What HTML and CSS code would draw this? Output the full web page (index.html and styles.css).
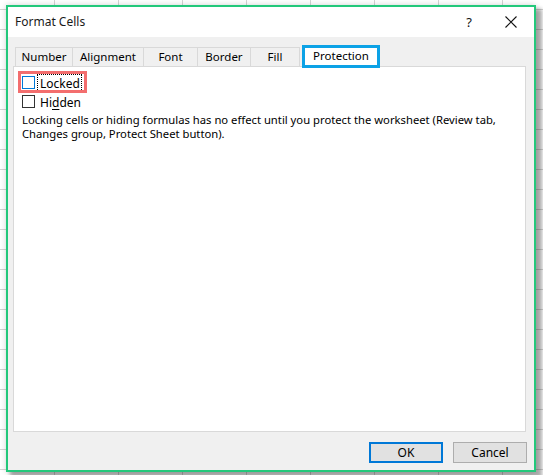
FILE: index.html
```html
<!DOCTYPE html>
<html>
<head>
<meta charset="utf-8">
<link rel="stylesheet" href="styles.css">
</head>
<body>
<div class="dialog">
  <div class="titlebar">
    <span class="title">Format Cells</span>
    <span class="help">?</span>
    <svg class="close" width="12" height="12" viewBox="0 0 12 12"><path d="M0.5 0.5 L11.5 11.5 M11.5 0.5 L0.5 11.5" stroke="#111" stroke-width="1.1" fill="none"/></svg>
  </div>
  <div class="tabs">
    <div class="tab t-number">Number</div>
    <div class="tab t-align">Alignment</div>
    <div class="tab t-font">Font</div>
    <div class="tab t-border">Border</div>
    <div class="tab t-fill">Fill</div>
    <div class="tab t-prot selected">Protection</div>
  </div>
  <div class="panel">
    <div class="row">
      <span class="cb cb-focus"></span><span class="label focus"><u>L</u>ocked</span>
    </div>
    <div class="row">
      <span class="cb"></span><span class="label">Hi<u>d</u>den</span>
    </div>
    <p class="desc"><span class="line">Locking cells or hiding formulas has no effect until you protect the worksheet (Review tab,</span><br><span class="line">Changes group, Protect Sheet button).</span></p>
    <div class="mark"></div>
  </div>
  <div class="buttons">
    <button class="btn default">OK</button>
    <button class="btn">Cancel</button>
  </div>
</div>
</body>
</html>
```
FILE: styles.css
```css
html, body {
  margin: 0;
  padding: 0;
}
body {
  width: 543px;
  height: 475px;
  overflow: hidden;
  background-color: #ffffff;
  background-image:
    linear-gradient(to right, #d4d4d4 1px, transparent 1px),
    linear-gradient(to bottom, #d4d4d4 1px, transparent 1px);
  background-size: 64px 20px;
  background-position: 54px 9px;
  font-family: "Noto Sans", "Open Sans", "DejaVu Sans", sans-serif;
  font-size: 12px;
  color: #000;
}
.dialog {
  margin: 5px 0 0 6px;
  width: 530px;
  height: 467px;
  box-sizing: border-box;
  border: 2px solid #23c87b;
  background: #f0f0f0;
  box-shadow: 0 0 6px rgba(0,0,0,0.18), 5px 5px 4px 1px rgba(0,0,0,0.32);
  display: flex;
  flex-direction: column;
}
.titlebar {
  height: 30px;
  flex: none;
  background: #ffffff;
  display: flex;
  align-items: center;
  padding-left: 7px;
  position: relative;
}
.title {
  font-size: 12px;
  color: #1a1a1a;
  flex: 1;
  padding-bottom: 1px;
}
.help {
  font-size: 13px;
  color: #111;
  margin-right: 33px;
}
.close {
  margin-right: 17px;
  display: block;
}
.tabs {
  flex: none;
  display: flex;
  height: 19px;
  margin-top: 10px;
  padding-left: 7px;
  position: relative;
  z-index: 1;
}
.tab {
  box-sizing: border-box;
  height: 19px;
  border-top: 1px solid #d9d9d9;
  border-left: 1px solid #d9d9d9;
  text-align: center;
  line-height: 17px;
  font-size: 11.5px;
}
.t-number { width: 57px; }
.t-align { width: 71px; }
.t-font { width: 54px; }
.t-border { width: 53px; }
.t-fill { width: 50px; border-right: 1px solid #d9d9d9; }
.t-prot { width: 78px; margin-left: 2px; }
.tab.selected {
  position: relative;
  background: #fff;
  border: none;
}
.tab.selected::after {
  content: "";
  position: absolute;
  left: 0;
  right: 0;
  top: -2px;
  bottom: -2px;
  border: 3px solid #0ca2e6;
}
.panel {
  flex: 1;
  margin: 0 8px 0 5px;
  background: #fff;
  border: 1px solid #d9d9d9;
  padding: 6px 8px 0;
  position: relative;
}
.row {
  height: 19px;
  display: flex;
  align-items: center;
}
.cb {
  width: 13px;
  height: 13px;
  box-sizing: border-box;
  border: 1px solid #333;
  background: #fff;
  flex: none;
}
.cb-focus {
  border-color: #0078d7;
}
.label {
  margin-left: 2px;
  padding: 0 1px 0 2px;
  height: 18px;
  line-height: 17px;
  box-sizing: border-box;
  border: 1px solid transparent;
  font-size: 12px;
}
.label.focus {
  border: 1px dotted #000;
}
.label u {
  text-decoration-thickness: 1px;
  text-underline-offset: 2px;
}
.desc {
  margin: 2px 0 0;
  line-height: 14px;
  font-size: 11.25px;
}
.line {
  white-space: nowrap;
}
.mark {
  position: absolute;
  left: 4px;
  top: 4px;
  width: 69px;
  height: 22px;
  box-sizing: border-box;
  border: 3px solid #f36e6e;
}
.buttons {
  flex: none;
  display: flex;
  justify-content: flex-end;
  gap: 10px;
  padding: 10px 7px 7px;
}
.btn {
  width: 74px;
  height: 21px;
  box-sizing: border-box;
  background: #e1e1e1;
  border: 1px solid #adadad;
  font-family: "Noto Sans", "Open Sans", sans-serif;
  font-size: 12px;
  color: #000;
  padding: 0;
  line-height: 17px;
}
.btn.default {
  border: 2px solid #0078d7;
}
```
